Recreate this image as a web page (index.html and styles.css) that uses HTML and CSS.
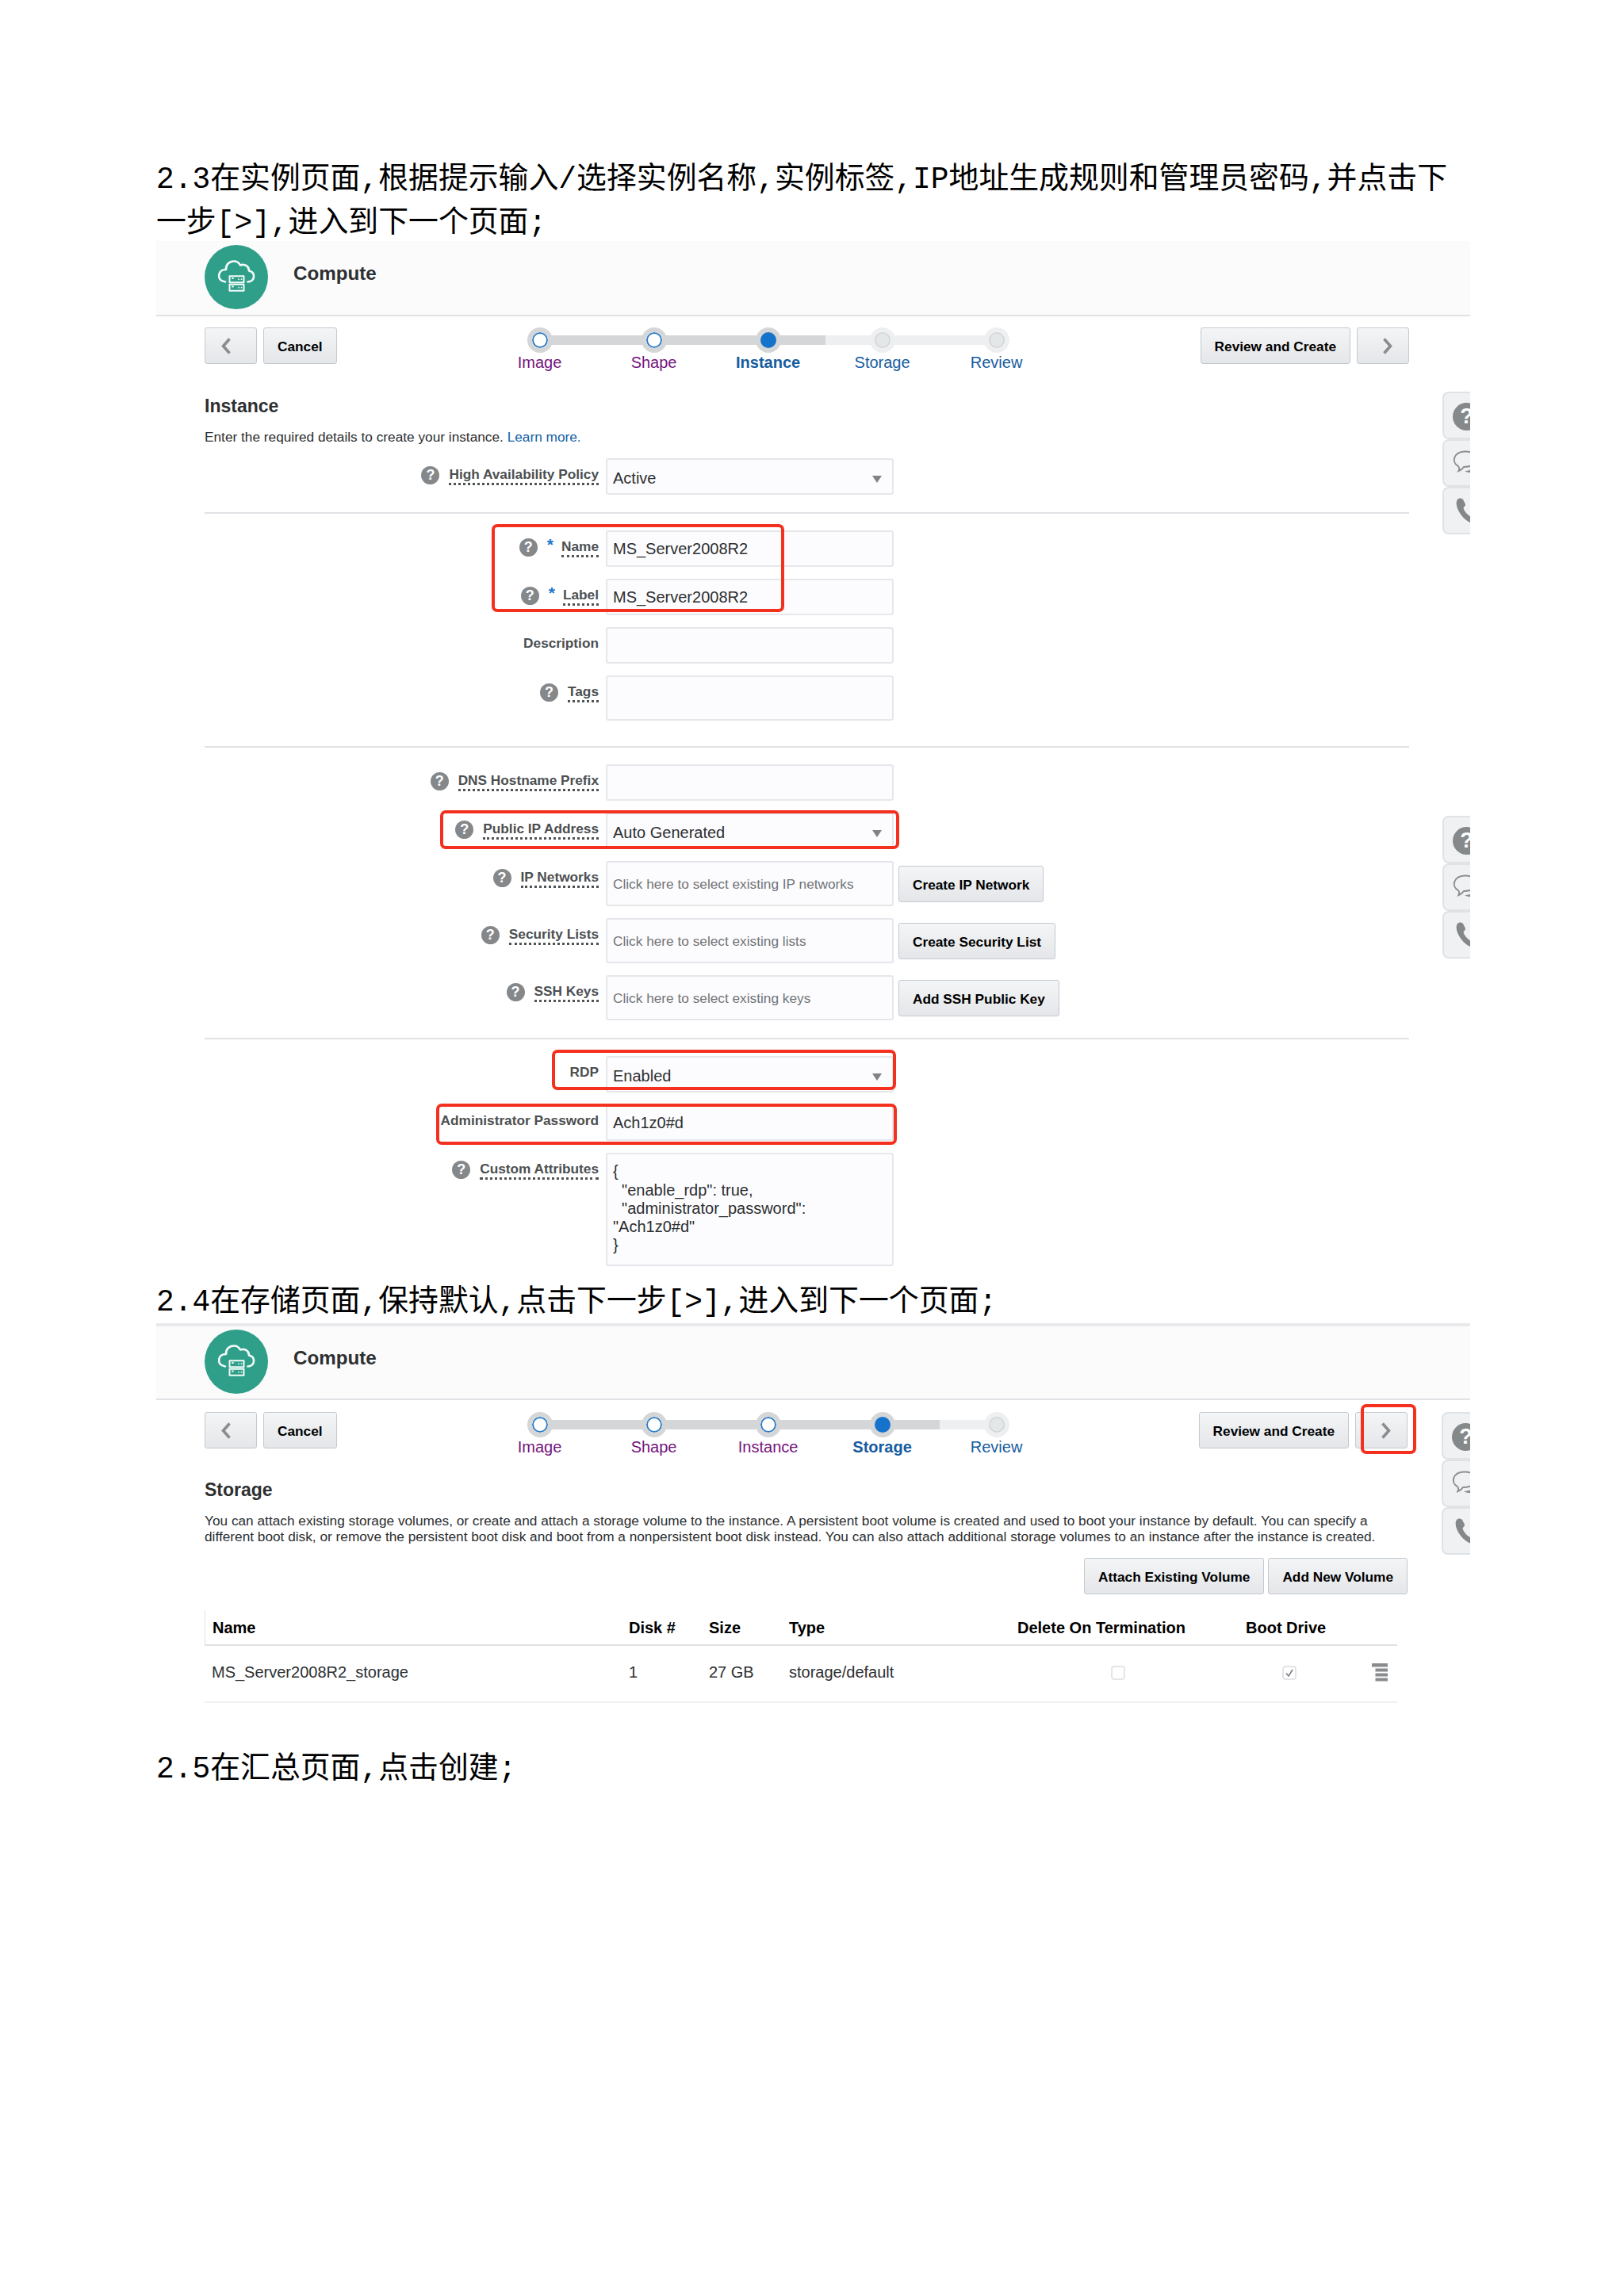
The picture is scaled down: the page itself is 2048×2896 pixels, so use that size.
FILE: index.html
```html
<!DOCTYPE html>
<html lang="zh-CN">
<head>
    <meta charset="UTF-8">
    <title>Compute</title>
    <link rel="stylesheet" href="styles.css">
</head>
<body>
    <!-- Shared icons -->
    <svg class="defs">
        <symbol id="cloud" viewBox="0 0 80 80">
            <g fill="none" stroke="#f2fbf9" stroke-width="2.6" stroke-linecap="round" stroke-linejoin="round">
                <path d="M26 46.5C20 45.5 17.5 42 18.2 37.5C19 33 22.500 31 27 31C26.500 25 31 20.500 37 20.500C41 20.500 43.500 22.500 45 25.500C51 23.500 56 27 56 32.500C60.500 33.500 62.500 36.500 62 40.500C61.500 44 58.500 46.500 54.500 46.500"/>
                <path stroke-width="2" d="M31.500 39.200h18v8h-18zM31.500 49.700h18v8h-18z"/>
                <path stroke-width="1.800" d="M35 42h1M43 43.200h0M46.500 43.200h0M35 52.500h1M43 53.700h0M46.500 53.700h0"/>
            </g>
        </symbol>
        <symbol id="chevron" viewBox="0 0 14 21">
            <path d="M11.500 1.500L3.500 10.500L11.500 19.500" fill="none" stroke="#8a8d90" stroke-width="3.600"/>
        </symbol>
        <symbol id="chat" viewBox="0 0 40 32">
            <path d="M7 20C-2 15 1 2 15 1.500C29 1 33 11 27 17C24 20 19 21 14 21C12 24 10 25 7.500 26C8.500 24 8.500 22 7 20z" fill="none" stroke="#8b8f91" stroke-width="2"/>
            <path d="M15 26C20 26 26 24 30 19C36 17 39 9 35 6C42 12 38 22 34 24C34 27 35 28 37 30C33 30 30 29 28 27C23 29 18 28 15 26z" fill="#8b8f91"/>
        </symbol>
        <symbol id="phone" viewBox="0 0 34 34">
            <path d="M2 2C4 0 7 0 9 2L12 8C12.500 10 10 11 9.500 13C11 18 16 23 21 25C23 24 24 22 26 22L32 26C33 28 32 31 30 32C24 35 14 31 7 22C1 14-1 6 2 2z" fill="#84888a"/>
        </symbol>
    </svg>

    <div class="page">
        <p class="step-text two-lines">2.3在实例页面,根据提示输入/选择实例名称,实例标签,IP地址生成规则和管理员密码,并点击下<br>一步[&gt;],进入到下一个页面;</p>

        <!-- Instance page -->
        <div class="shot instance">
            <header>
                <div class="logo"><svg><use href="#cloud"/></svg></div>
                <h1>Compute</h1>
            </header>
            <div class="toolbar">
                <button class="arrow prev"><svg><use href="#chevron"/></svg></button>
                <button>Cancel</button>
                <div class="train">
                    <div class="stop done"><i></i><span>Image</span></div>
                    <div class="stop done"><i></i><span>Shape</span></div>
                    <div class="stop current"><i></i><span>Instance</span></div>
                    <div class="stop"><i></i><span>Storage</span></div>
                    <div class="stop"><i></i><span>Review</span></div>
                </div>
                <button class="review">Review and Create</button>
                <button class="arrow next"><svg><use href="#chevron"/></svg></button>
            </div>
            <h2>Instance</h2>
            <p class="intro">Enter the required details to create your instance. <a>Learn more.</a></p>

            <div class="group first">
                <div class="row">
                    <div class="label"><b class="help">?</b><span class="tip">High Availability Policy</span></div>
                    <div class="field select">Active</div>
                </div>
            </div>
            <div class="group">
                <div class="row">
                    <div class="label"><b class="help">?</b><em>*</em><span class="tip">Name</span></div>
                    <div class="field">MS_Server2008R2</div>
                </div>
                <div class="row">
                    <div class="label"><b class="help">?</b><em>*</em><span class="tip">Label</span></div>
                    <div class="field">MS_Server2008R2</div>
                </div>
                <div class="row">
                    <div class="label"><span>Description</span></div>
                    <div class="field"></div>
                </div>
                <div class="row">
                    <div class="label"><b class="help">?</b><span class="tip">Tags</span></div>
                    <div class="field tall"></div>
                </div>
            </div>
            <div class="group network">
                <div class="row">
                    <div class="label"><b class="help">?</b><span class="tip">DNS Hostname Prefix</span></div>
                    <div class="field"></div>
                </div>
                <div class="row">
                    <div class="label"><b class="help">?</b><span class="tip">Public IP Address</span></div>
                    <div class="field select">Auto Generated</div>
                </div>
                <div class="row">
                    <div class="label"><b class="help">?</b><span class="tip">IP Networks</span></div>
                    <div class="field tall">Click here to select existing IP networks</div>
                    <button>Create IP Network</button>
                </div>
                <div class="row">
                    <div class="label"><b class="help">?</b><span class="tip">Security Lists</span></div>
                    <div class="field tall">Click here to select existing lists</div>
                    <button>Create Security List</button>
                </div>
                <div class="row">
                    <div class="label"><b class="help">?</b><span class="tip">SSH Keys</span></div>
                    <div class="field tall">Click here to select existing keys</div>
                    <button>Add SSH Public Key</button>
                </div>
            </div>
            <div class="group">
                <div class="row">
                    <div class="label"><span>RDP</span></div>
                    <div class="field select">Enabled</div>
                </div>
                <div class="row">
                    <div class="label"><span>Administrator Password</span></div>
                    <div class="field">Ach1z0#d</div>
                </div>
                <div class="row">
                    <div class="label"><b class="help">?</b><span class="tip">Custom Attributes</span></div>
                    <div class="field area">{
  "enable_rdp": true,
  "administrator_password":
"Ach1z0#d"
}</div>
                </div>
            </div>

            <div class="side side-top">
                <div><b>?</b></div>
                <div><svg class="chat"><use href="#chat"/></svg></div>
                <div><svg class="phone"><use href="#phone"/></svg></div>
            </div>
            <div class="side side-mid">
                <div><b>?</b></div>
                <div><svg class="chat"><use href="#chat"/></svg></div>
                <div><svg class="phone"><use href="#phone"/></svg></div>
            </div>
            <div class="mark mark-name"></div>
            <div class="mark mark-ip"></div>
            <div class="mark mark-rdp"></div>
            <div class="mark mark-password"></div>
        </div>

        <p class="step-text">2.4在存储页面,保持默认,点击下一步[&gt;],进入到下一个页面;</p>

        <!-- Storage page -->
        <div class="shot storage">
            <header>
                <div class="logo"><svg><use href="#cloud"/></svg></div>
                <h1>Compute</h1>
            </header>
            <div class="toolbar">
                <button class="arrow prev"><svg><use href="#chevron"/></svg></button>
                <button>Cancel</button>
                <div class="train">
                    <div class="stop done"><i></i><span>Image</span></div>
                    <div class="stop done"><i></i><span>Shape</span></div>
                    <div class="stop done"><i></i><span>Instance</span></div>
                    <div class="stop current"><i></i><span>Storage</span></div>
                    <div class="stop"><i></i><span>Review</span></div>
                </div>
                <button class="review">Review and Create</button>
                <button class="arrow next"><svg><use href="#chevron"/></svg></button>
            </div>
            <h2>Storage</h2>
            <p class="intro">You can attach existing storage volumes, or create and attach a storage volume to the instance. A persistent boot volume is created and used to boot your instance by default. You can specify a<br>different boot disk, or remove the persistent boot disk and boot from a nonpersistent boot disk instead. You can also attach additional storage volumes to an instance after the instance is created.</p>
            <div class="actions">
                <button>Attach Existing Volume</button>
                <button>Add New Volume</button>
            </div>
            <table>
                <tr>
                    <th class="c-name">Name</th>
                    <th class="c-disk">Disk #</th>
                    <th class="c-size">Size</th>
                    <th class="c-type">Type</th>
                    <th class="c-delete">Delete On Termination</th>
                    <th class="c-boot">Boot Drive</th>
                    <th></th>
                </tr>
                <tr>
                    <td>MS_Server2008R2_storage</td>
                    <td>1</td>
                    <td>27 GB</td>
                    <td>storage/default</td>
                    <td><svg class="check check-delete" viewBox="0 0 18 18"><rect x="1" y="1" width="16" height="16" rx="3"/></svg></td>
                    <td><svg class="check check-boot" viewBox="0 0 18 18"><rect x="1" y="1" width="16" height="16" rx="3"/><path d="M5 9.500L8 13L13 5"/></svg></td>
                    <td><svg class="menu" viewBox="0 0 20 23"><path d="M0 0h20v4.500H0zM4.500 6.500H20v4H4.500zM4.500 12.500H20v4H4.500zM4.500 18.500H20v4H4.500z"/></svg></td>
                </tr>
            </table>

            <div class="side">
                <div><b>?</b></div>
                <div><svg class="chat"><use href="#chat"/></svg></div>
                <div><svg class="phone"><use href="#phone"/></svg></div>
            </div>
            <div class="mark mark-next"></div>
        </div>

        <p class="step-text">2.5在汇总页面,点击创建;</p>
    </div>
</body>
</html>
```

FILE: styles.css
```css
* {
    box-sizing: border-box;
}
body {
    margin: 0;
    background: #fff;
    color: #2d2f31;
    font-family: "Liberation Sans", Arial, sans-serif;
    font-size: 20px;
}
.defs {
    display: none;
}
.page {
    width: 1657px;
    height: 2896px;
    margin-left: 197px;
    padding-top: 199px;
}
.step-text {
    margin: 0;
    height: 54px;
    color: #000;
    font-family: "Liberation Mono", "Noto Sans CJK SC", monospace;
    font-size: 37.87px;
    line-height: 55px;
    white-space: nowrap;
}
.two-lines {
    height: 105px;
}

/* Screens */
.shot {
    position: relative;
    overflow: hidden;
}
.instance {
    height: 1311px;
}
.storage {
    height: 535px;
}
header {
    display: flex;
    height: 95px;
    padding: 5px 0 0 61px;
    background: #fbfbfc;
    border-bottom: 2px solid #e0e2e5;
}
.storage header {
    height: 97px;
    padding-top: 4px;
    border-top: 4px solid #e9e8eb;
}
.logo {
    width: 80px;
    height: 81px;
    border-radius: 50%;
    background: #2f9f89;
}
.logo svg {
    width: 80px;
    height: 80px;
}
h1 {
    margin: 16px 0 0 32px;
    font-size: 24.2px;
    line-height: 40px;
}
h2 {
    margin: 39px 0 0 61px;
    font-size: 23px;
    line-height: 28px;
}
.storage h2 {
    margin-top: 38px;
}
.intro {
    margin: 15px 0 0 61px;
    font-size: 17.26px;
    line-height: 20.4px;
    white-space: nowrap;
}
.intro a {
    color: #145fa5;
}

/* Buttons */
button {
    height: 46px;
    padding: 0 17px;
    border: 1px solid #c3cad0;
    border-radius: 3px;
    background: linear-gradient(#f4f5f6, #e4e6e9);
    color: #000;
    font-family: inherit;
    font-size: 17.26px;
    font-weight: bold;
    line-height: 47px;
    white-space: nowrap;
}
.arrow {
    display: flex;
    align-items: center;
    width: 66px;
    padding: 0 0 0 19px;
}
.arrow svg {
    width: 14px;
    height: 21px;
}
.next {
    padding-left: 31px;
}
.next svg {
    transform: scaleX(-1);
}
.toolbar {
    display: flex;
    gap: 8px;
    height: 46px;
    margin: 14px 77px 0 61px;
}
.storage .toolbar {
    margin: 15px 79px 0 61px;
}
.review {
    margin-left: auto;
}

/* Progress train */
.train {
    display: flex;
    margin-left: 176px;
}
.stop {
    position: relative;
    width: 144px;
    text-align: center;
    color: #155c9f;
}
.stop::before,
.stop::after {
    content: "";
    position: absolute;
    top: 10px;
    left: 0;
    width: 72px;
    height: 12px;
    background: #eeeff1;
}
.stop::after {
    left: 72px;
}
.done::before, .done::after,
.current::before, .current::after {
    background: #d5d6d8;
}
.stop:first-child::before,
.stop:last-child::after {
    display: none;
}
.stop i {
    position: relative;
    z-index: 1;
    display: block;
    width: 32px;
    height: 32px;
    margin: 0 auto;
    border: 6px solid #eeeff1;
    border-radius: 50%;
    background: #e3e7e8;
    box-shadow: inset 0 0 0 1.5px #cfd3d5;
}
.done i {
    border-color: #d5d6d8;
    background: #fff;
    box-shadow: inset 0 0 0 2px #2a7dc9;
}
.current i {
    border-color: #d5d6d8;
    background: #1673cb;
    box-shadow: none;
}
.stop span {
    display: block;
    line-height: 24px;
}
.done span {
    color: #75137d;
}
.current span {
    font-weight: bold;
}

/* Form */
.group {
    margin: 0 77px 0 61px;
    padding: 21px 0 17px;
    border-top: 2px solid #e0e2e5;
}
.group.first {
    padding: 17px 0 7px;
    border: none;
}
.group.network {
    padding-bottom: 7px;
}
.row {
    display: flex;
    align-items: flex-start;
    margin-bottom: 15px;
}
.label {
    display: flex;
    justify-content: flex-end;
    width: 497px;
    margin-right: 9px;
    padding-top: 10px;
    color: #4c4f51;
    font-size: 17.26px;
    font-weight: bold;
    line-height: 20px;
    white-space: nowrap;
}
.tip {
    height: 24px;
    border-bottom: 3px dotted #505355;
}
.help {
    width: 23px;
    height: 23px;
    margin-right: 12px;
    border-radius: 50%;
    background: #85888a;
    color: #fff;
    font-size: 18px;
    line-height: 23px;
    text-align: center;
}
.label em {
    margin: -2px 10px 0 0;
    color: #1a75c9;
    font-size: 21px;
    font-style: normal;
}
.field {
    position: relative;
    width: 363px;
    height: 46px;
    padding-left: 7px;
    border: 2px solid #e5e7eb;
    border-radius: 3px;
    background: #fcfcfe;
    line-height: 43px;
    white-space: nowrap;
}
.select {
    line-height: 46px;
}
.select::after {
    content: "";
    position: absolute;
    top: 20px;
    right: 13px;
    border: 6px solid transparent;
    border-top: 9px solid #808385;
    border-bottom: none;
}
.tall {
    height: 57px;
    color: #717477;
    font-size: 17.26px;
    line-height: 54px;
}
.area {
    height: 143px;
    padding-top: 10px;
    line-height: 23.2px;
    white-space: pre;
}
.row button {
    margin: 6px 0 0 6px;
}

/* Side tabs */
.side {
    position: absolute;
    top: 112px;
    right: 0;
    width: 36px;
}
.side-top {
    top: 190px;
    width: 35px;
}
.side-mid {
    top: 725px;
    width: 35px;
}
.side div {
    height: 60px;
    padding: 12px 0 0 11px;
    overflow: hidden;
    border: 2px solid #dfe3e6;
    border-right: none;
    border-radius: 8px 0 0 8px;
    background: #f0f1f3;
}
.side b {
    display: block;
    width: 35px;
    height: 35px;
    border-radius: 50%;
    background: #85898a;
    color: #fff;
    font-size: 27px;
    line-height: 35px;
    text-align: center;
}
.side .chat {
    width: 40px;
    height: 32px;
}
.side .phone {
    width: 34px;
    height: 34px;
    margin-left: 4px;
}

/* Red highlights */
.mark {
    position: absolute;
    border: 4px solid #f4301f;
    border-radius: 7px;
}
.mark-name {
    left: 423px;
    top: 357px;
    width: 369px;
    height: 111px;
}
.mark-ip {
    left: 358px;
    top: 718px;
    width: 579px;
    height: 49px;
}
.mark-rdp {
    left: 499px;
    top: 1020px;
    width: 434px;
    height: 51px;
}
.mark-password {
    left: 353px;
    top: 1088px;
    width: 581px;
    height: 52px;
}
.mark-next {
    left: 1519px;
    top: 102px;
    width: 70px;
    height: 63px;
}

/* Volumes table */
.actions {
    display: flex;
    justify-content: flex-end;
    gap: 5px;
    margin: 16px 79px 20px 0;
}
table {
    width: 1504px;
    margin-left: 61px;
    border-collapse: separate;
    border-spacing: 0;
    table-layout: fixed;
}
th, td {
    padding: 0 0 0 10px;
    text-align: left;
    white-space: nowrap;
}
th {
    height: 45px;
    padding-top: 2px;
    border-bottom: 2px solid #dfe2e4;
    color: #000;
}
th:first-child, td:first-child {
    padding-left: 9px;
}
td {
    height: 72px;
    padding-bottom: 2px;
    border-bottom: 2px solid #f0f0f3;
}
.c-name {
    width: 525px;
    border-left: 1px solid #dfe2e4;
}
.c-disk, .c-size {
    width: 101px;
}
.c-type {
    width: 288px;
}
.c-delete {
    width: 288px;
}
.c-boot {
    width: 159px;
}
.check, .menu {
    display: block;
    width: 18px;
    height: 18px;
    fill: #fff;
    stroke: #dcdde1;
    stroke-width: 1.5;
}
.check path {
    fill: none;
    stroke: #77797b;
}
.check-delete {
    margin-left: 118px;
}
.check-boot {
    margin-left: 46px;
}
.menu {
    width: 20px;
    height: 23px;
    fill: #898c8e;
    stroke: none;
}
```
